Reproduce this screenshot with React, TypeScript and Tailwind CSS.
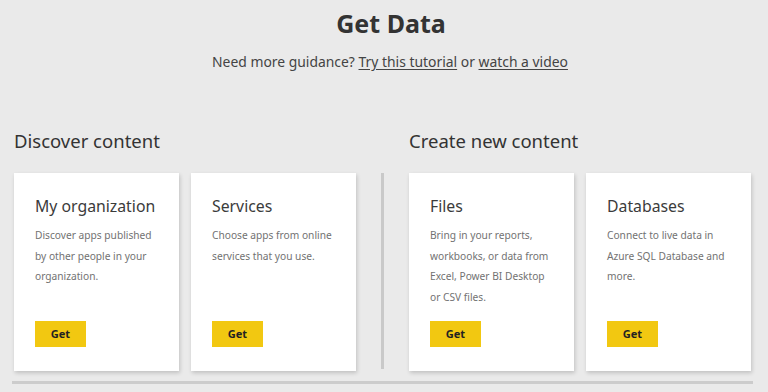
import React from 'react'

type Card = {
  title: string
  lines: string[]
}

const discover: Card[] = [
  { title: 'My organization', lines: ['Discover apps published', 'by other people in your', 'organization.'] },
  { title: 'Services', lines: ['Choose apps from online', 'services that you use.'] },
]

const create: Card[] = [
  { title: 'Files', lines: ['Bring in your reports,', 'workbooks, or data from', 'Excel, Power BI Desktop', 'or CSV files.'] },
  { title: 'Databases', lines: ['Connect to live data in', 'Azure SQL Database and', 'more.'] },
]

const SourceCard = ({ card }: { card: Card }) => (
  <div className="flex h-[198px] w-[165px] flex-col bg-white pl-[21px] pt-[21px] shadow-[1px_2px_4px_rgba(0,0,0,0.18)]">
    <div className="text-[15.8px] leading-[24px] text-[#3b3b3b]">{card.title}</div>
    <div className="mt-[7px] text-[10.2px] leading-[20.5px] text-[#727272]">
      {card.lines.map((l) => (
        <div key={l}>{l}</div>
      ))}
    </div>
    <button
      type="button"
      className="mt-auto mb-[24px] h-[26px] w-[51px] bg-[#f2c811] text-[11px] font-bold text-[#222]"
    >
      Get
    </button>
  </div>
)

export default function App() {
  return (
    <div
      className="h-[392px] w-[768px] overflow-hidden bg-[#eaeaea]"
      style={{ fontFamily: '"Noto Sans", "Open Sans", sans-serif' }}
    >
      <div className="pt-[5px] text-center">
        <h1 className="pl-[14px] text-[25px] font-bold leading-[36px] text-[#333]">Get Data</h1>
        <p className="mt-[11px] pl-[12px] text-[13.9px] leading-[20px] text-[#444]">
          Need more guidance? <span className="underline underline-offset-2">Try this tutorial</span> or{' '}
          <span className="underline underline-offset-2">watch a video</span>
        </p>
      </div>

      <div className="mt-[56px] grid grid-cols-[342px_53px_342px] px-[14px]">
        <div className="text-[18.5px] leading-[26px] text-[#333]">Discover content</div>
        <div />
        <div className="text-[18.5px] leading-[26px] text-[#333]">Create new content</div>

        <div className="mt-[19px] flex gap-[12px]">
          {discover.map((c) => (
            <SourceCard key={c.title} card={c} />
          ))}
        </div>
        <div className="mt-[19px] flex justify-center">
          <div className="h-[196px] w-[3px] bg-[#c9c9c9]" />
        </div>
        <div className="mt-[19px] flex gap-[12px]">
          {create.map((c) => (
            <SourceCard key={c.title} card={c} />
          ))}
        </div>
      </div>

      <div className="mx-[12px] mt-[10px] h-[3px] w-[741px] bg-[#cccccc]" />
    </div>
  )
}
